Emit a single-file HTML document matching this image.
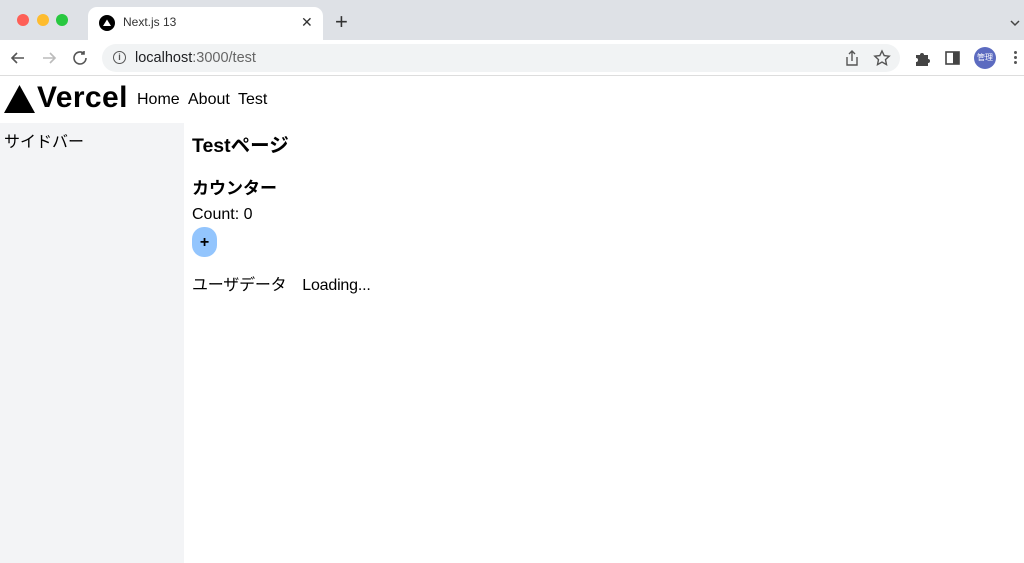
<!DOCTYPE html>
<html><head><meta charset="utf-8"><style>
*{margin:0;padding:0;box-sizing:border-box}
body{width:1024px;height:563px;overflow:hidden;font-family:"Liberation Sans","Noto Sans CJK JP",sans-serif;background:#fff;position:relative;color:#000}
.abs{position:absolute}
</style></head><body>
<div class="abs" style="left:0;top:0;width:1024px;height:40px;background:#dee1e6"></div>
<div class="abs" style="left:17px;top:14px;width:12px;height:12px;border-radius:50%;background:#fe5f57"></div>
<div class="abs" style="left:37px;top:14px;width:12px;height:12px;border-radius:50%;background:#febc2e"></div>
<div class="abs" style="left:56px;top:14px;width:12px;height:12px;border-radius:50%;background:#28c840"></div>
<div class="abs" style="left:88px;top:7px;width:235px;height:34px;background:#fff;border-radius:9px 9px 0 0"></div>
<div class="abs" style="left:99px;top:15px;width:16px;height:16px;border-radius:50%;background:#000"></div>
<svg class="abs" style="left:99px;top:15px" width="16" height="16"><polygon points="8,4.5 12,11 4,11" fill="#fff"/></svg>
<div class="abs" style="left:123px;top:15px;font-size:12px;color:#333">Next.js 13</div>
<div class="abs" style="left:301px;top:14px;font-size:14px;color:#333">✕</div>
<div class="abs" style="left:335px;top:9px;font-size:22px;color:#333">+</div>
<svg class="abs" style="left:1010px;top:20px" width="10" height="8"><path d="M1 1l4 4 4-4" stroke="#444" stroke-width="1.5" fill="none"/></svg>
<div class="abs" style="left:0;top:40px;width:1024px;height:35px;background:#fff"></div>
<svg class="abs" style="left:8px;top:49px" width="80" height="18"><path d="M16 9H4M9 4L4 9l5 5" stroke="#555" stroke-width="1.6" fill="none"/><path d="M35 9h12M42 4l5 5-5 5" stroke="#bbb" stroke-width="1.6" fill="none"/><path d="M78 9a6 6 0 1 1-2-4.5M76 2v3h-3" stroke="#555" stroke-width="1.6" fill="none"/></svg>
<div class="abs" style="left:102px;top:44px;width:798px;height:28px;background:#f1f3f4;border-radius:14px"></div>
<div class="abs" style="left:113px;top:51px;width:13px;height:13px;border:1.5px solid #555;border-radius:50%;font-size:9px;text-align:center;line-height:10px;color:#555;font-weight:bold">i</div>
<div class="abs" style="left:135px;top:50px;font-size:14.5px;color:#202124">localhost<span style="color:#666">:3000/test</span></div>
<svg class="abs" style="left:843px;top:49px" width="50" height="18"><path d="M4 8v8h10V8M9 2v10M6 5l3-3 3 3" stroke="#555" stroke-width="1.4" fill="none"/><path d="M39 2l2.2 4.6 5 .6-3.7 3.4 1 5L39 13l-4.5 2.6 1-5-3.7-3.4 5-.6z" stroke="#555" stroke-width="1.4" fill="none"/></svg>
<svg class="abs" style="left:914px;top:50px" width="50" height="16"><path d="M2 5h4a2 2 0 1 1 4 0h4v4a2 2 0 1 1 0 4v3H2v-4a2 2 0 1 0 0-4z" fill="#444"/><rect x="32" y="2" width="13" height="12" stroke="#444" stroke-width="1.6" fill="none"/><rect x="39" y="2" width="6" height="12" fill="#444"/></svg>
<div class="abs" style="left:974px;top:47px;width:22px;height:22px;border-radius:50%;background:#5c6bc0;color:#fff;font-size:8px;text-align:center;line-height:22px">管理</div>
<div class="abs" style="left:1014px;top:51px;width:3px;height:3px;background:#555;border-radius:50%;box-shadow:0 5px 0 #555,0 10px 0 #555"></div>
<div class="abs" style="left:0;top:75px;width:1024px;height:1px;background:#ddd"></div>
<svg class="abs" style="left:4px;top:85px" width="31" height="28"><polygon points="15.5,0 31,28 0,28" fill="#000"/></svg>
<div class="abs" style="left:37px;top:81px;font-size:30px;font-weight:bold;letter-spacing:0.4px;line-height:34px">Vercel</div>
<div class="abs" style="left:137px;top:91px;font-size:16px;line-height:18px">Home</div>
<div class="abs" style="left:188px;top:91px;font-size:16px;line-height:18px">About</div>
<div class="abs" style="left:238px;top:91px;font-size:16px;line-height:18px">Test</div>
<div class="abs" style="left:0;top:123px;width:184px;height:440px;background:#f3f4f6"></div>
<div class="abs" style="left:4px;top:133px;font-size:16px;line-height:20px">サイドバー</div>
<div class="abs" style="left:192px;top:135px;font-size:19.5px;font-weight:bold;line-height:22px">Testページ</div>
<div class="abs" style="left:192px;top:178px;font-size:17px;font-weight:bold;line-height:22px">カウンター</div>
<div class="abs" style="left:192px;top:206px;font-size:16px;line-height:18px">Count: 0</div>
<div class="abs" style="left:192px;top:227px;width:25px;height:30px;border-radius:12px;background:#93c5fd;font-size:16px;font-weight:bold;text-align:center;line-height:31px">+</div>
<div class="abs" style="left:192px;top:276px;font-size:16px;line-height:20px;letter-spacing:-0.2px">ユーザデータ　Loading...</div>
</body></html>
